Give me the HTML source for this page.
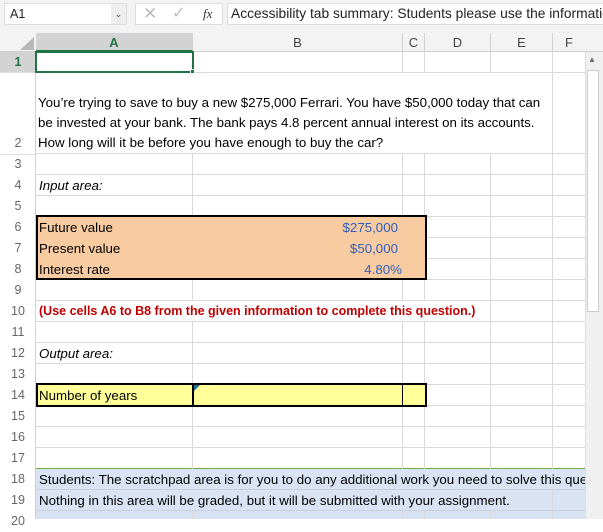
<!DOCTYPE html><html><head><style>
*{margin:0;padding:0;box-sizing:border-box}
body{width:603px;height:519px;overflow:hidden;background:#fff;font-family:"Liberation Sans",sans-serif;position:relative;color:#000}
div{position:absolute}
.t{font-size:13.3px;white-space:nowrap;line-height:21px}
.rh{left:0;width:36px;text-align:center;color:#666;font-size:12.5px;line-height:21px}
.vl{width:1px;background:#d9d9d9}
.hl{height:1px;background:#d9d9d9;left:36px;width:549px}
.ch{top:33px;height:19px;text-align:center;font-size:13px;color:#444;line-height:19px;border-right:1px solid #d0d0d0}
</style></head><body>
<div style="left:0;top:0;width:603px;height:33px;background:#f3f3f3"></div>
<div style="left:4px;top:3px;width:123px;height:22px;background:#fff;border:1px solid #ddd"></div>
<div style="left:10px;top:3px;font-size:12.5px;line-height:22px;color:#222">A1</div>
<div style="left:111px;top:4px;width:15px;height:20px;background:#eee;font-size:9px;text-align:center;line-height:20px;color:#444">⌄</div>
<div style="left:135px;top:3px;width:88px;height:22px;background:#fff;border:1px solid #ddd"></div>
<div style="left:143px;top:3px;font-size:17px;line-height:22px;color:#bbb">✕</div>
<div style="left:172px;top:3px;font-size:16px;line-height:22px;color:#bbb">✓</div>
<div style="left:203px;top:3px;font-size:13px;line-height:22px;color:#333;font-family:'Liberation Serif',serif;font-style:italic">fx</div>
<div style="left:227px;top:3px;width:380px;height:22px;background:#fff;border:1px solid #ddd"></div>
<div style="left:231px;top:3px;font-size:13.8px;line-height:21px;color:#222;white-space:nowrap">Accessibility tab summary: Students please use the information</div>
<div style="left:0;top:33px;width:603px;height:19px;background:#f3f3f3;border-bottom:1px solid #d0d0d0"></div>
<div style="left:20px;top:37px;width:0;height:0;border-left:14px solid transparent;border-bottom:13px solid #b8b8b8"></div>
<div class="ch" style="left:36px;width:157px;background:#d3d3d3;color:#217346;font-weight:bold;border-bottom:2px solid #217346;height:19px">A</div>
<div class="ch" style="left:193px;width:210px">B</div>
<div class="ch" style="left:403px;width:22px">C</div>
<div class="ch" style="left:425px;width:66px">D</div>
<div class="ch" style="left:491px;width:62px">E</div>
<div class="ch" style="left:553px;width:32px;border-right:none">F</div>
<div style="left:35px;top:52px;width:1px;height:467px;background:#d0d0d0"></div>
<div style="left:0;top:52px;width:35px;height:20px;background:#d3d3d3"></div>
<div class="rh" style="top:52px;height:20px;line-height:20px;color:#217346;font-weight:bold">1</div>
<div class="rh" style="top:133px">2</div>
<div class="rh" style="top:154px">3</div><div class="rh" style="top:175px">4</div><div class="rh" style="top:196px">5</div><div class="rh" style="top:217px">6</div><div class="rh" style="top:238px">7</div><div class="rh" style="top:259px">8</div><div class="rh" style="top:280px">9</div><div class="rh" style="top:301px">10</div><div class="rh" style="top:322px">11</div><div class="rh" style="top:343px">12</div><div class="rh" style="top:364px">13</div><div class="rh" style="top:385px">14</div><div class="rh" style="top:406px">15</div><div class="rh" style="top:427px">16</div><div class="rh" style="top:448px">17</div><div class="rh" style="top:469px">18</div><div class="rh" style="top:490px">19</div><div class="rh" style="top:511px">20</div>
<div style="left:0;top:72px;width:35px;height:1px;background:#e0e0e0"></div>
<div style="left:0;top:154px;width:35px;height:1px;background:#e0e0e0"></div>
<div style="left:36px;top:469px;width:549px;height:50px;background:#dae3f3"></div>
<div style="left:36px;top:468px;width:549px;height:2px;background:#70ad47"></div>
<div class="vl" style="left:192px;top:52px;height:20px"></div>
<div class="vl" style="left:402px;top:52px;height:20px"></div>
<div class="vl" style="left:424px;top:52px;height:20px"></div>
<div class="vl" style="left:490px;top:52px;height:20px"></div>
<div class="vl" style="left:552px;top:52px;height:467px"></div>
<div class="vl" style="left:192px;top:154px;height:365px"></div>
<div class="vl" style="left:402px;top:154px;height:365px"></div>
<div class="vl" style="left:424px;top:154px;height:365px"></div>
<div class="vl" style="left:490px;top:154px;height:365px"></div>
<div class="hl" style="top:72px"></div><div class="hl" style="top:153px"></div>
<div class="hl" style="top:174px"></div><div class="hl" style="top:195px"></div><div class="hl" style="top:216px"></div><div class="hl" style="top:237px"></div><div class="hl" style="top:258px"></div><div class="hl" style="top:279px"></div><div class="hl" style="top:300px"></div><div class="hl" style="top:321px"></div><div class="hl" style="top:342px"></div><div class="hl" style="top:363px"></div><div class="hl" style="top:384px"></div><div class="hl" style="top:405px"></div><div class="hl" style="top:426px"></div><div class="hl" style="top:447px"></div><div class="hl" style="top:489px;background:#c8cfdc"></div><div class="hl" style="top:510px;background:#c8cfdc"></div>
<div style="left:35px;top:51px;width:159px;height:22px;border:2px solid #217346"></div>
<div style="left:190px;top:69px;width:5px;height:5px;background:#217346;border:1px solid #fff"></div>
<div style="left:36px;top:73px;width:516px;height:80px;background:#fff"></div>
<div class="t" style="left:38px;top:93px;line-height:20px">You’re trying to save to buy a new $275,000 Ferrari. You have $50,000 today that can<br>be invested at your bank. The bank pays 4.8 percent annual interest on its accounts.<br>How long will it be before you have enough to buy the car?</div>
<div class="t" style="left:39px;top:175px;font-style:italic">Input area:</div>
<div style="left:36px;top:215px;width:391px;height:65px;background:#f8cba0;border:2px solid #000"></div>
<div class="t" style="left:39px;top:217px">Future value</div>
<div class="t" style="left:39px;top:238px">Present value</div>
<div class="t" style="left:39px;top:259px">Interest rate</div>
<div class="t" style="left:300px;top:217px;width:98px;text-align:right;color:#2f5fbf">$275,000</div>
<div class="t" style="left:300px;top:238px;width:98px;text-align:right;color:#2f5fbf">$50,000</div>
<div class="t" style="left:300px;top:259px;width:102px;text-align:right;color:#2f5fbf">4.80%</div>
<div class="t" style="left:36px;top:301px;padding-left:3px;background:#fff;font-weight:bold;color:#c00000;font-size:12.5px;width:444px;height:20px">(Use cells A6 to B8 from the given information to complete this question.)</div>
<div class="t" style="left:39px;top:343px;font-style:italic">Output area:</div>
<div style="left:36px;top:383px;width:391px;height:24px;background:#ffff99;border:2px solid #000"></div>
<div style="left:192px;top:385px;width:2px;height:20px;background:#000"></div>
<div style="left:402px;top:385px;width:1px;height:20px;background:#000"></div>
<div style="left:194px;top:385px;width:0;height:0;border-top:6px solid #1f6e8c;border-right:6px solid transparent"></div>
<div class="t" style="left:39px;top:385px">Number of years</div>
<div class="t" style="left:36px;top:469px;padding-left:3px;background:#dae3f3;width:549px;height:20px;overflow:hidden">Students: The scratchpad area is for you to do any additional work you need to solve this question.</div>
<div class="t" style="left:36px;top:490px;padding-left:3px;background:#dae3f3;width:516px;height:20px">Nothing in this area will be graded, but it will be submitted with your assignment.</div>
<div style="left:585px;top:52px;width:18px;height:467px;background:#f0f0f0;border-left:1px solid #ddd"></div>
<div style="left:588px;top:55px;font-size:8px;color:#666">▲</div>
<div style="left:587px;top:70px;width:12px;height:242px;background:#fff;border:1px solid #ccc"></div>
</body></html>
